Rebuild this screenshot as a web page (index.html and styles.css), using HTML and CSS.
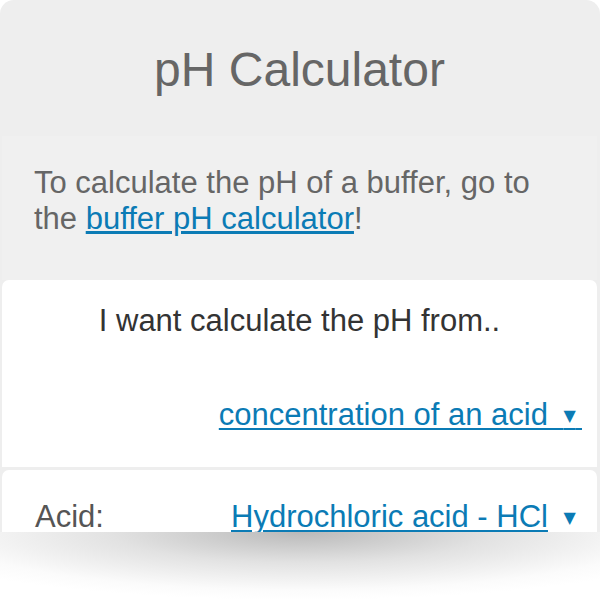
FILE: index.html
```html
<!DOCTYPE html>
<html>
<head>
  <title>pH Calculator</title>
  <link rel="stylesheet" href="styles.css">
</head>
<body>
  <div class="card">
    <div class="head">
      <h1>pH Calculator</h1>
    </div>

    <div class="note">
      To calculate the pH of a buffer, go to the <a href="#">buffer pH calculator</a>!
    </div>

    <div class="block">
      <p class="ask">I want calculate the pH from..</p>
      <div class="pick-row">
        <a href="#" class="pick lined">concentration of an acid&ensp;<span class="tri">&#9660;</span>&thinsp;</a>
      </div>
    </div>

    <div class="block second">
      <div class="field">
        <span class="label">Acid:</span>
        <a href="#" class="pick"><span class="val">Hydrochloric acid - HCl</span>&ensp;<span class="tri">&#9660;</span>&thinsp;</a>
      </div>
    </div>
  </div>
  <div class="fade"></div>
</body>
</html>
```

FILE: styles.css
```css
body {
  margin: 0;
  background: #fff;
  font-family: "Liberation Sans", Arial, sans-serif;
}
.card {
  background: #eee;
  border-radius: 14px 14px 0 0;
  padding: 0 3px 0 2px;
  height: 532px;
  overflow: hidden;
  box-sizing: border-box;
}
.head {
  height: 136px;
  padding-top: 46px;
  box-sizing: border-box;
}
h1 {
  margin: 0;
  font-size: 48px;
  line-height: 48px;
  font-weight: normal;
  color: #666;
  text-align: center;
}
.note {
  background: #f0f0f0;
  color: #666;
  font-size: 31px;
  line-height: 36px;
  padding: 29px 43px 43px 32px;
  height: 144px;
  box-sizing: border-box;
}
a {
  color: #0b7bb5;
}
.block {
  background: #fff;
  border-radius: 7px 7px 0 0;
  height: 187px;
  box-sizing: border-box;
  padding: 23px 15px 0 33px;
  font-size: 31px;
  line-height: 36px;
}
.block.second {
  margin-top: 3px;
  height: auto;
  padding-top: 29px;
  padding-bottom: 30px;
}
.ask {
  margin: 0;
  color: #333;
  text-align: center;
  padding-right: 18px;
}
.pick-row {
  margin-top: 58px;
  text-align: right;
}
.pick {
  white-space: nowrap;
  text-decoration: none;
}
.pick.lined,
.pick .val {
  text-decoration: underline;
  text-decoration-thickness: 2px;
  text-underline-offset: 3px;
}
/* dropdown caret */
.tri {
  font-family: "DejaVu Sans", sans-serif;
  font-size: 16px;
  vertical-align: 4px;
}
.field {
  display: flex;
  justify-content: space-between;
}
.label {
  color: #555;
}
.fade {
  height: 68px;
  background: radial-gradient(ellipse 70% 100% at 50% 0, #b9b9b9 0%, #e2e2e2 45%, #fbfbfb 85%, #fff 100%);
}
```
